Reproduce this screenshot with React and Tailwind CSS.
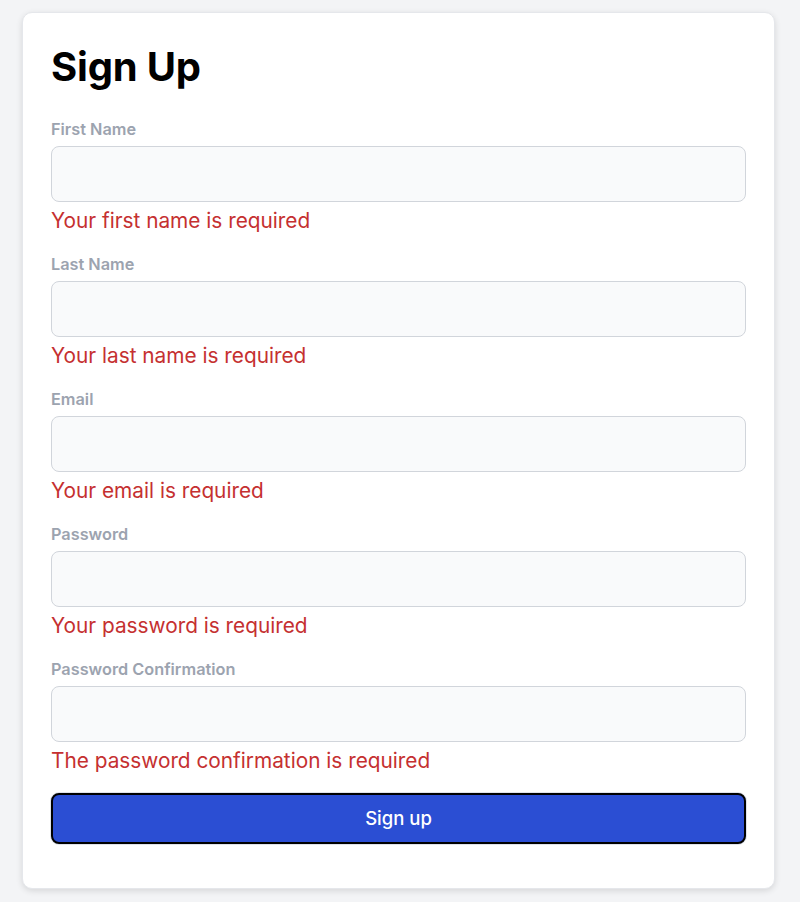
export default function App() {
  const fields = [
    { label: "First Name", error: "Your first name is required", type: "text" },
    { label: "Last Name", error: "Your last name is required", type: "text" },
    { label: "Email", error: "Your email is required", type: "email" },
    { label: "Password", error: "Your password is required", type: "password" },
    { label: "Password Confirmation", error: "The password confirmation is required", type: "password" },
  ];
  return (
    <div className="min-h-[902px] bg-[#f3f4f6] pt-[12px] font-['Inter','Liberation_Sans',sans-serif]">
      <div className="ml-[22px] w-[753px] rounded-[10px] border border-[#e5e7eb] bg-white px-[28px] pt-[32px] pb-[44px] shadow-[0_2px_6px_rgba(0,0,0,0.12)]">
        <h1 className="text-[40px] leading-[44px] font-bold text-black tracking-[-0.005em]">Sign Up</h1>
        <form className="mt-[31px] flex flex-col gap-[20px]" onSubmit={(e) => e.preventDefault()}>
          {fields.map((f) => (
            <div key={f.label} className="flex flex-col">
              <label className="mb-2 text-[16.3px] leading-[18px] font-semibold text-[#9ca3af]">{f.label}</label>
              <input
                type={f.type}
                className="h-[56px] w-full rounded-[8px] border border-[#d1d5db] bg-[#f9fafb] px-3 outline-none"
              />
              <p className="mt-[5px] text-[20.8px] leading-7 text-[#c53030]">{f.error}</p>
            </div>
          ))}
          <button
            type="submit"
            className="-mt-[2px] h-[51px] w-full rounded-[8px] border-2 border-black bg-[#2b4ed3] text-[18.5px] font-medium text-white shadow-[0_0_0_1px_#dfe3ea]"
          >
            Sign up
          </button>
        </form>
      </div>
    </div>
  );
}
